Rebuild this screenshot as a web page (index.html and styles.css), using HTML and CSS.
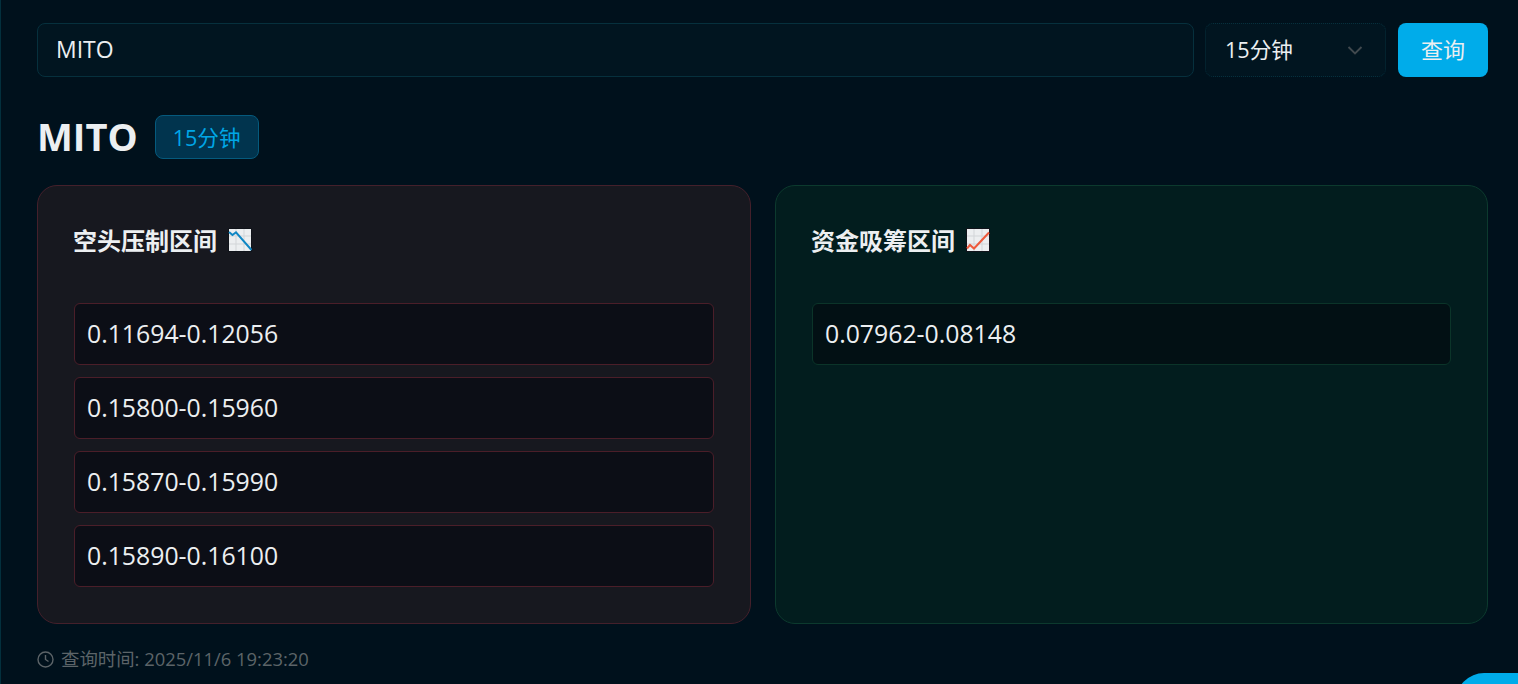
FILE: index.html
```html
<!DOCTYPE html>
<html lang="zh-CN">

<head>
    <meta charset="UTF-8">
    <meta name="viewport" content="width=device-width, initial-scale=1.0">
    <title>MITO 查询</title>
    <link rel="stylesheet" href="styles.css">
</head>

<body>
    <div class="page">
        <form class="search-bar">
            <input class="search-input" type="text" value="MITO">
            <div class="period-select">
                <span>15分钟</span>
                <svg class="chevron" width="16" height="16" viewBox="0 0 16 16" fill="none">
                    <path d="M1.500 5l6.500 6.500L14.500 5" stroke="#41494e" stroke-width="1.900" />
                </svg>
            </div>
            <button class="search-button" type="button">查询</button>
        </form>

        <div class="result-head">
            <h1>MITO</h1>
            <span class="period-tag">15分钟</span>
        </div>

        <div class="zone-grid">
            <section class="zone zone-short">
                <h2>
                    空头压制区间
                    <svg class="chart-icon" width="24" height="24" viewBox="0 0 24 24">
                        <rect x="0" y="0" width="24" height="24" fill="#10131a" />
                        <rect x="1" y="1" width="22" height="22" fill="#eceef0" />
                        <path d="M8 1v22M16 1v22M1 8h22M1 16h22" stroke="#d2d5d8" stroke-width="1" />
                        <path d="M1 4l3.500 3 3.500-2.700L23.500 22" fill="none" stroke="#0f86c4" stroke-width="2" />
                    </svg>
                </h2>
                <ul class="zone-list">
                    <li>0.11694-0.12056</li>
                    <li>0.15800-0.15960</li>
                    <li>0.15870-0.15990</li>
                    <li>0.15890-0.16100</li>
                </ul>
            </section>

            <section class="zone zone-long">
                <h2>
                    资金吸筹区间
                    <svg class="chart-icon" width="24" height="24" viewBox="0 0 24 24">
                        <rect x="0" y="0" width="24" height="24" fill="#10131a" />
                        <rect x="1" y="1" width="22" height="22" fill="#eceef0" />
                        <path d="M8 1v22M16 1v22M1 8h22M1 16h22" stroke="#d2d5d8" stroke-width="1" />
                        <path d="M1 20.500l3-3.500 4 3.500L23 4.500" fill="none" stroke="#ee5a3c" stroke-width="2" />
                    </svg>
                </h2>
                <ul class="zone-list">
                    <li>0.07962-0.08148</li>
                </ul>
            </section>
        </div>

        <p class="query-time">
            <svg width="17" height="17" viewBox="0 0 17 17" fill="none" stroke="#5c6468" stroke-width="1.400">
                <circle cx="8.500" cy="8.500" r="7.500" />
                <path d="M8.500 4v4.500l3 2" />
            </svg>
            查询时间: 2025/11/6 19:23:20
        </p>
    </div>

    <div class="float-clip">
        <div class="float-button"></div>
    </div>
</body>

</html>
```

FILE: styles.css
```css
* {
    box-sizing: border-box;
}

html,
body {
    height: 100%;
}

body {
    margin: 0;
    overflow: hidden;
    background-color: #00111c;
    border-left: 1px solid #03303d;
    color: #eceff1;
    font-family: "Open Sans", "Noto Sans CJK SC", sans-serif;
}

.page {
    padding: 23px 30px 0 36px;
}

.search-bar {
    display: flex;
    gap: 12px;
    height: 54px;
    margin: 0;
}

.search-input {
    flex: 1;
    min-width: 0;
    margin-right: -1px;
    padding: 0 18px 2px;
    background: #011520;
    border: 1px solid #06303d;
    border-radius: 8px;
    color: #eceff1;
    font-family: inherit;
    font-size: 23px;
}

.period-select {
    display: flex;
    align-items: center;
    justify-content: space-between;
    width: 181px;
    padding: 0 22px 4px 19px;
    background: #011520;
    border: 1px dotted #06303d;
    border-radius: 8px;
    font-size: 21.600px;
}

.chevron {
    margin-top: 3px;
}

.search-button {
    width: 90px;
    padding: 0 0 5px;
    border: none;
    border-radius: 8px;
    background-color: #00acea;
    color: #eceff1;
    font-family: inherit;
    font-size: 22px;
}

.result-head {
    display: flex;
    align-items: center;
    gap: 17px;
    margin: 38px 0 26px;
}

h1 {
    margin: 0;
    padding-bottom: 2px;
    font-size: 38px;
    line-height: 42px;
    font-weight: 700;
}

.period-tag {
    display: flex;
    align-items: center;
    height: 44px;
    padding: 0 17px 1px;
    background: #01344e;
    border: 1px solid #055a7d;
    border-radius: 8px;
    color: #00a6e6;
    font-size: 21.600px;
}

.zone-grid {
    display: grid;
    grid-template-columns: 714px 713px;
    gap: 24px;
}

.zone {
    height: 439px;
    padding: 36px;
    border: 1px solid;
    border-radius: 20px;
}

.zone-short {
    background: #17181f;
    border-color: #44202b;
}

.zone-long {
    background: #021d1e;
    border-color: #0c3a2e;
}

h2 {
    display: flex;
    align-items: center;
    gap: 11px;
    height: 38px;
    margin: 0 0 43px -1px;
    padding-bottom: 3px;
    font-size: 24px;
    font-weight: 700;
}

.zone-list {
    display: flex;
    flex-direction: column;
    gap: 12px;
    margin: 0;
    padding: 0;
    list-style: none;
}

.zone-list li {
    display: flex;
    align-items: center;
    height: 62px;
    padding: 0 12px 3px;
    border: 1px solid;
    border-radius: 6px;
    font-size: 24.800px;
}

.zone-short li {
    background: #0c0e16;
    border-color: #4b1e29;
}

.zone-long li {
    background: #021014;
    border-color: #0b3429;
}

.query-time {
    display: flex;
    align-items: center;
    gap: 7px;
    margin: 22px 0 0;
    color: #5c6468;
    font-size: 18.400px;
    line-height: 26px;
}

.float-clip {
    position: fixed;
    right: 0;
    bottom: 0;
    width: 62px;
    height: 11px;
    overflow: hidden;
}

.float-button {
    width: 100px;
    height: 56px;
    border-radius: 28px;
    background-color: #00acea;
}
```
